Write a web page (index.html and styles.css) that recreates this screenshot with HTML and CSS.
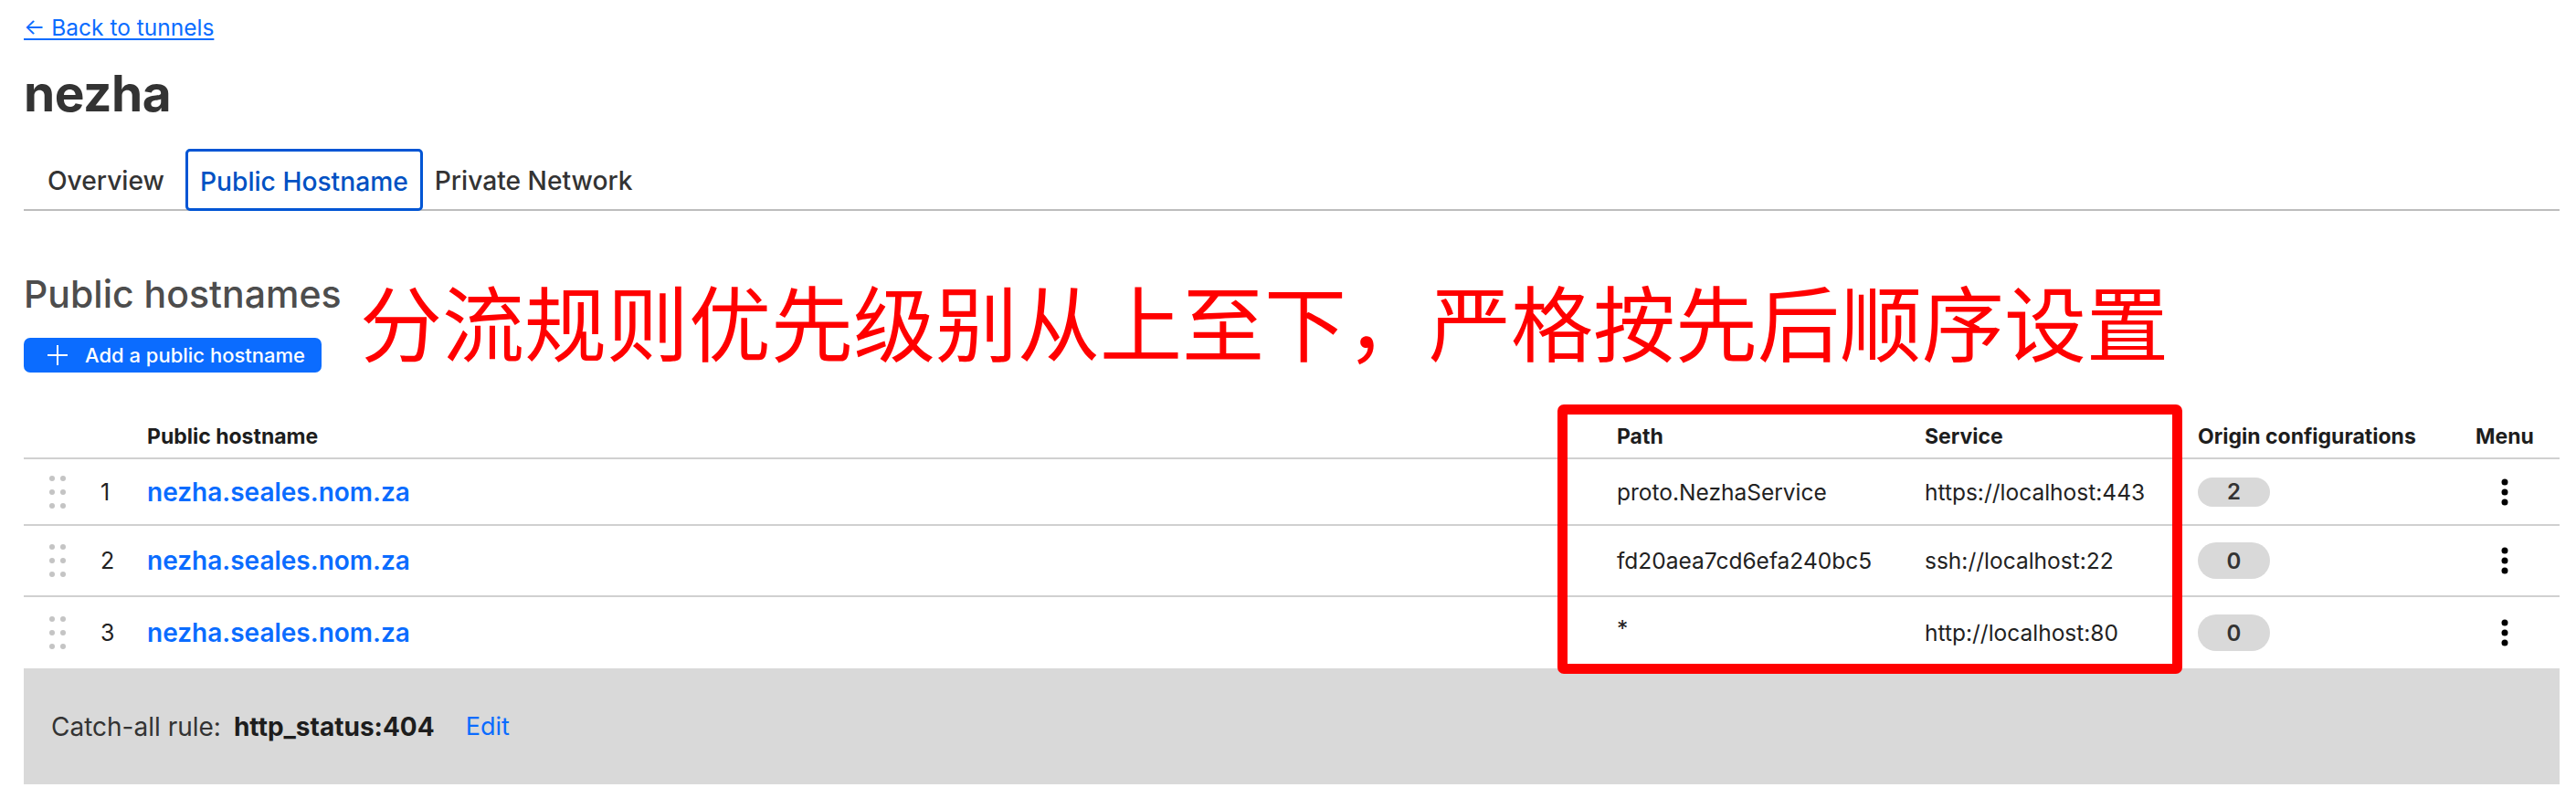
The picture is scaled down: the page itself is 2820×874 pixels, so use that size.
FILE: index.html
```html
<!DOCTYPE html>
<html lang="en">
<head>
<meta charset="utf-8">
<title>nezha - Public Hostname</title>
<link rel="stylesheet" href="styles.css">
</head>
<body>
<div class="page">
  <a class="back" href="#">← Back to tunnels</a>
  <h1 class="title">nezha</h1>
  <nav class="tabs">
    <a class="tab first" href="#">Overview</a>
    <a class="tab active" href="#">Public Hostname</a>
    <a class="tab" href="#">Private Network</a>
  </nav>

  <section class="section">
    <h2 class="heading">Public hostnames</h2>
    <button class="add-btn" type="button">
      <svg class="plus" viewBox="0 0 22 22" width="22" height="22"><path d="M11 0V22M0 11H22" stroke="#fff" stroke-width="2" fill="none"/></svg>
      <span>Add a public hostname</span>
    </button>

    <div class="table">
      <div class="row head">
        <div></div>
        <div></div>
        <div>Public hostname</div>
        <div>Path</div>
        <div>Service</div>
        <div>Origin configurations</div>
        <div>Menu</div>
      </div>
      <div class="row r1">
        <div class="handle-cell"><svg class="handle" viewBox="0 0 18 36" width="18" height="36"><g fill="#c4c4c4"><circle cx="3" cy="3" r="3"/><circle cx="15" cy="3" r="3"/><circle cx="3" cy="18" r="3"/><circle cx="15" cy="18" r="3"/><circle cx="3" cy="33" r="3"/><circle cx="15" cy="33" r="3"/></g></svg></div>
        <div class="num">1</div>
        <div><a class="host" href="#">nezha.seales.nom.za</a></div>
        <div class="cell">proto.NezhaService</div>
        <div class="cell">https://localhost:443</div>
        <div><span class="pill small">2</span></div>
        <div class="menu-cell"><svg class="kebab" viewBox="0 0 8 30" width="8" height="30"><g fill="#000"><circle cx="4" cy="4" r="3.5"/><circle cx="4" cy="15" r="3.5"/><circle cx="4" cy="26" r="3.5"/></g></svg></div>
      </div>
      <div class="row r2">
        <div class="handle-cell"><svg class="handle" viewBox="0 0 18 36" width="18" height="36"><g fill="#c4c4c4"><circle cx="3" cy="3" r="3"/><circle cx="15" cy="3" r="3"/><circle cx="3" cy="18" r="3"/><circle cx="15" cy="18" r="3"/><circle cx="3" cy="33" r="3"/><circle cx="15" cy="33" r="3"/></g></svg></div>
        <div class="num">2</div>
        <div><a class="host" href="#">nezha.seales.nom.za</a></div>
        <div class="cell">fd20aea7cd6efa240bc5</div>
        <div class="cell">ssh://localhost:22</div>
        <div><span class="pill">0</span></div>
        <div class="menu-cell"><svg class="kebab" viewBox="0 0 8 30" width="8" height="30"><g fill="#000"><circle cx="4" cy="4" r="3.5"/><circle cx="4" cy="15" r="3.5"/><circle cx="4" cy="26" r="3.5"/></g></svg></div>
      </div>
      <div class="row r3">
        <div class="handle-cell"><svg class="handle" viewBox="0 0 18 36" width="18" height="36"><g fill="#c4c4c4"><circle cx="3" cy="3" r="3"/><circle cx="15" cy="3" r="3"/><circle cx="3" cy="18" r="3"/><circle cx="15" cy="18" r="3"/><circle cx="3" cy="33" r="3"/><circle cx="15" cy="33" r="3"/></g></svg></div>
        <div class="num">3</div>
        <div><a class="host" href="#">nezha.seales.nom.za</a></div>
        <div class="cell star">*</div>
        <div class="cell">http://localhost:80</div>
        <div><span class="pill">0</span></div>
        <div class="menu-cell"><svg class="kebab" viewBox="0 0 8 30" width="8" height="30"><g fill="#000"><circle cx="4" cy="4" r="3.5"/><circle cx="4" cy="15" r="3.5"/><circle cx="4" cy="26" r="3.5"/></g></svg></div>
      </div>
      <div class="catch-all">
        <span class="ca-label">Catch-all rule:</span>
        <strong class="ca-value">http_status:404</strong>
        <a class="ca-edit" href="#">Edit</a>
      </div>
    </div>
  </section>

  <div class="note">分流规则优先级别从上至下，严格按先后顺序设置</div>
  <div class="highlight"></div>
</div>
</body>
</html>
```

FILE: styles.css
```css
* { box-sizing: border-box; }

html, body {
  margin: 0;
  padding: 0;
  background: #fff;
}

body {
  font-family: Inter, "Noto Sans", "Noto Sans CJK SC", sans-serif;
  color: #222;
}

.page {
  position: relative;
  padding: 0 18px 0 26px;
  width: 2820px;
  height: 874px;
  overflow: hidden;
}

.back {
  display: inline-block;
  margin-top: 15px;
  font-size: 24.5px;
  line-height: 30px;
  color: #0a6cff;
  text-decoration: underline;
  text-underline-offset: 3px;
  text-decoration-thickness: 2px;
}

.title {
  margin: 25px 0 0;
  font-size: 55px;
  line-height: 64px;
  font-weight: 700;
  color: #333;
  letter-spacing: -0.5px;
}

.tabs {
  display: flex;
  align-items: stretch;
  gap: 0;
  margin-top: 29px;
  height: 68px;
  padding-left: 13px;
  border-bottom: 2px solid #bdbdbd;
}

.tab {
  display: flex;
  align-items: center;
  padding: 4px 12px 0 13px;
  font-size: 28.2px;
  font-weight: 500;
  color: #333;
  text-decoration: none;
}

.tab.first {
  margin-right: 11px;
}

.tab.active {
  padding: 4px 13px 0;
  border: 3px solid #0055d4;
  border-radius: 5px;
  color: #0051c3;
  margin-bottom: -2px;
}

.section {
  margin-top: 65px;
}

.heading {
  margin: 0;
  font-size: 41px;
  line-height: 52px;
  font-weight: 500;
  color: #4d4d4d;
}

.add-btn {
  display: flex;
  align-items: center;
  gap: 19px;
  margin-top: 22px;
  height: 38px;
  width: 326px;
  padding: 0 0 0 26px;
  border: 0;
  border-radius: 7px;
  background: #0b6cff;
  color: #fff;
  font-family: inherit;
  font-size: 22px;
  font-weight: 500;
}

.plus { display: block; }

.table {
  margin-top: 47px;
}

.row {
  display: grid;
  grid-template-columns: 84px 51px 1609px 337px 299px 304px 92px;
  align-items: center;
  border-bottom: 2px solid #d0d0d0;
}

.row.head {
  height: 48px;
  font-size: 23px;
  font-weight: 700;
  color: #1d1d1d;
}

.row.r1 { height: 73px; }
.row.r2 { height: 78px; }
.row.r3 { height: 78px; border-bottom: 0; }

.handle-cell {
  padding-left: 28px;
  display: flex;
  align-items: center;
}

.handle { display: block; }

.num {
  font-size: 25px;
  color: #222;
}

.host {
  font-size: 28px;
  font-weight: 600;
  color: #0a6cff;
  text-decoration: none;
}

.cell {
  font-size: 24.5px;
  color: #222;
}

.cell.star {
  margin-top: -10px;
}

.pill {
  display: flex;
  align-items: center;
  justify-content: center;
  width: 79px;
  height: 40px;
  border-radius: 20px;
  background: #d9d9d9;
  font-size: 24px;
  font-weight: 600;
  color: #333;
}

.pill.small {
  height: 32px;
  border-radius: 16px;
}

.menu-cell {
  display: flex;
  padding-left: 28px;
}

.kebab { display: block; }

.catch-all {
  display: flex;
  align-items: center;
  height: 127px;
  padding-left: 30px;
  background: #d9d9d9;
  font-size: 28px;
  color: #333;
}

.ca-value {
  margin-left: 14px;
  font-weight: 700;
  color: #1d1d1d;
}

.ca-edit {
  margin-left: 34px;
  color: #0a6cff;
  text-decoration: none;
  font-size: 27px;
}

/* annotation overlays */
.note {
  position: absolute;
  left: 394px;
  top: 305px;
  font-family: "Noto Sans CJK SC", sans-serif;
  font-size: 90px;
  line-height: 90px;
  color: #ff0000;
  white-space: nowrap;
}

.highlight {
  position: absolute;
  left: 1705px;
  top: 443px;
  width: 684px;
  height: 295px;
  border: 11px solid #ff0000;
  border-radius: 7px;
}
```
